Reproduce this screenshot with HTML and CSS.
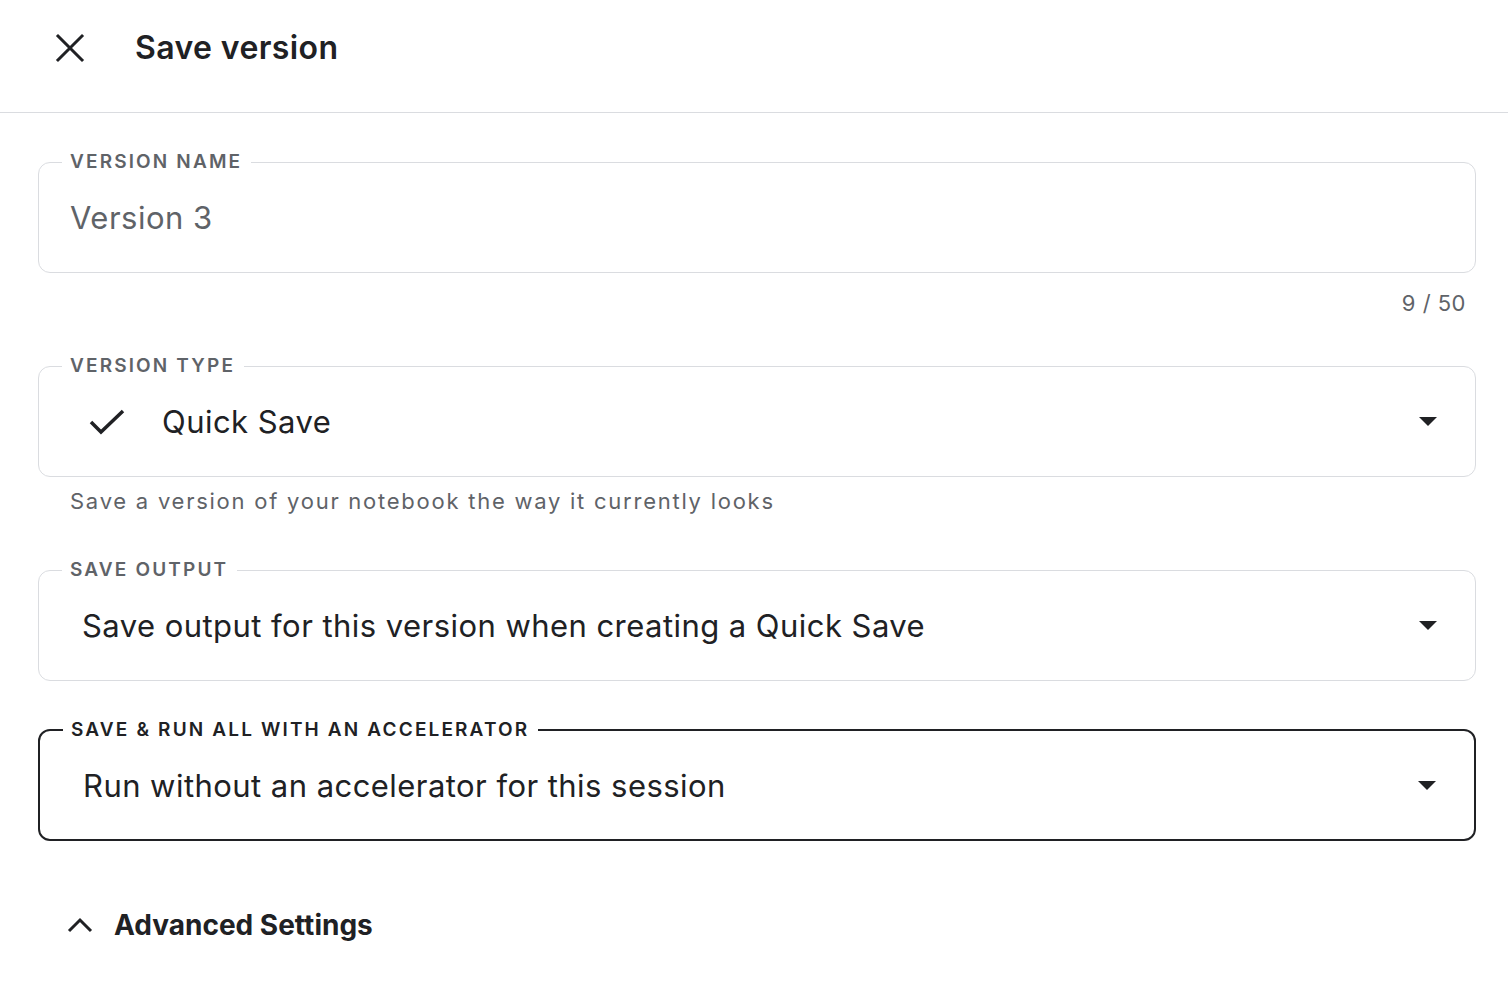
FILE: index.html
```html
<!DOCTYPE html>
<html lang="en">
<head>
<meta charset="utf-8">
<title>Save version</title>
<link rel="stylesheet" href="styles.css">
</head>
<body>
<header class="header">
  <button class="close" aria-label="Close">
    <svg width="32" height="32" viewBox="0 0 32 32"><path d="M4 4 L28 28 M28 4 L4 28" stroke="#202124" stroke-width="3" fill="none" stroke-linecap="square"/></svg>
  </button>
  <h1 class="title">Save version</h1>
</header>
<main class="content">
  <fieldset class="field">
    <legend class="legend">Version name</legend>
    <div class="field-body input-body">Version 3</div>
  </fieldset>
  <div class="counter">9 / 50</div>

  <fieldset class="field field-type">
    <legend class="legend">Version type</legend>
    <div class="field-body select-body">
      <svg class="check" width="38" height="28" viewBox="0 0 38 28"><path d="M3 14 L13 24 L35 3" stroke="#202124" stroke-width="3.5" fill="none"/></svg>
      <span class="select-text">Quick Save</span>
      <span class="arrow"></span>
    </div>
  </fieldset>
  <div class="helper">Save a version of your notebook the way it currently looks</div>

  <fieldset class="field field-output">
    <legend class="legend">Save output</legend>
    <div class="field-body select-body plain">
      <span class="select-text">Save output for this version when creating a Quick Save</span>
      <span class="arrow"></span>
    </div>
  </fieldset>

  <fieldset class="field field-focused">
    <legend class="legend">Save &amp; Run All with an accelerator</legend>
    <div class="field-body select-body plain">
      <span class="select-text">Run without an accelerator for this session</span>
      <span class="arrow"></span>
    </div>
  </fieldset>

  <button class="advanced">
    <svg width="28" height="18" viewBox="0 0 28 18"><path d="M3 15 L14 4 L25 15" stroke="#202124" stroke-width="3" fill="none"/></svg>
    <span>Advanced Settings</span>
  </button>
</main>
</body>
</html>
```
FILE: styles.css
```css
* { box-sizing: border-box; }
html, body { margin: 0; padding: 0; background: #fff; }
body {
  font-family: Inter, "Noto Sans", "Liberation Sans", sans-serif;
  color: #202124;
  width: 1508px;
  height: 988px;
  overflow: hidden;
}
.header {
  height: 113px;
  border-bottom: 1px solid #dadce0;
  display: flex;
  align-items: center;
  padding-left: 54px;
  padding-bottom: 17px;
}
.close {
  background: none;
  border: none;
  padding: 0;
  width: 32px;
  height: 32px;
  display: flex;
  cursor: pointer;
}
.title {
  margin: 0 0 0 49px;
  font-size: 32px;
  font-weight: 600;
  color: #202124;
  letter-spacing: 0.4px;
}
.content {
  padding: 38px 32px 0 38px;
  display: flex;
  flex-direction: column;
}
.field {
  margin: 0;
  padding: 0;
  border: 1px solid #dadce0;
  border-radius: 12px;
  width: 1438px;
  min-width: 0;
}
.legend {
  margin-left: 23px;
  padding: 0 9px 0 8px;
  font-size: 19px;
  line-height: 22px;
  font-weight: 600;
  letter-spacing: 2.15px;
  text-transform: uppercase;
  color: #5f6368;
}
.field-body {
  height: 99px;
  display: flex;
  align-items: center;
  padding-bottom: 10px;
}
.input-body {
  padding-left: 31px;
  font-size: 31px;
  color: #5f6368;
  letter-spacing: 0.5px;
}
.counter {
  align-self: flex-end;
  margin: 15px 10px 0 0;
  font-size: 22px;
  line-height: 30px;
  color: #5f6368;
  letter-spacing: 0.5px;
}
.field-type { margin-top: 37px; }
.select-body {
  padding-left: 49px;
  padding-right: 38px;
}
.select-body.plain { padding-left: 43px; }
.check { flex: none; }
.select-body .check + .select-text { margin-left: 36px; }
.select-text {
  flex: 1;
  font-size: 31px;
  color: #202124;
  letter-spacing: 0.45px;
}
.arrow {
  width: 0;
  height: 0;
  border-left: 9px solid transparent;
  border-right: 9px solid transparent;
  border-top: 9px solid #202124;
  flex: none;
}
.helper {
  margin: 10px 0 0 32px;
  font-size: 22px;
  line-height: 28px;
  color: #5f6368;
  letter-spacing: 1.75px;
}
.field-output { margin-top: 44px; }
.field-focused {
  margin-top: 38px;
  border: 2px solid #202124;
}
.field-focused .legend { color: #202124; }
.field-focused .field-body { height: 98px; }
.advanced {
  margin: 67px 0 0 28px;
  align-self: flex-start;
  display: flex;
  align-items: center;
  background: none;
  border: none;
  padding: 0;
  font-family: inherit;
  font-size: 28px;
  font-weight: 700;
  color: #202124;
  cursor: pointer;
}
.advanced svg { margin-right: 20px; }
```
